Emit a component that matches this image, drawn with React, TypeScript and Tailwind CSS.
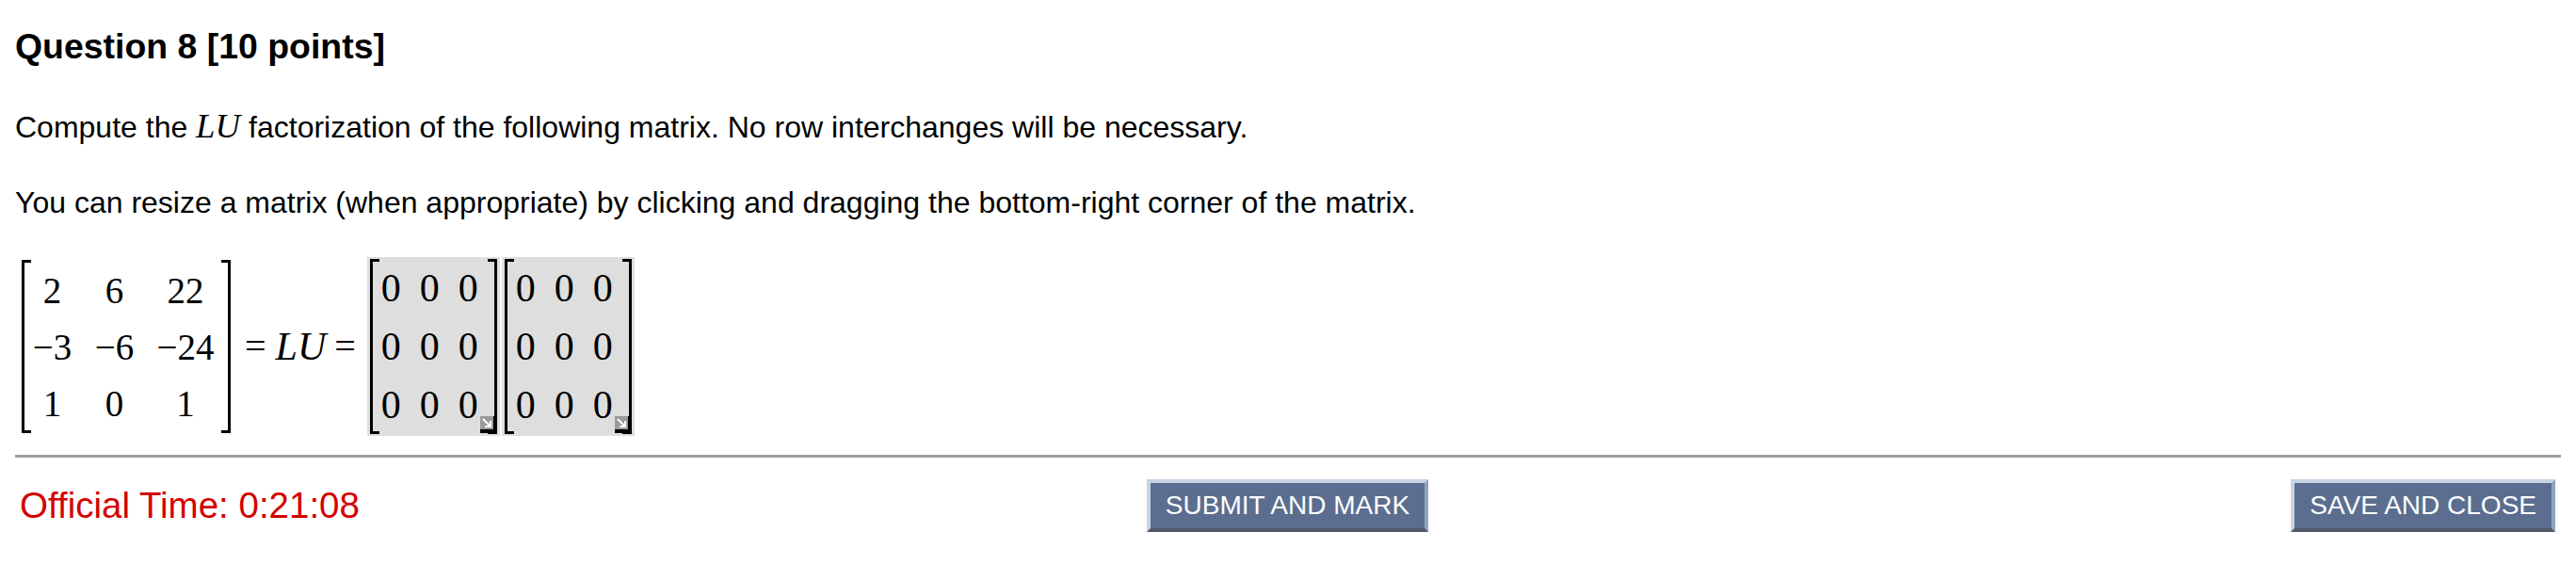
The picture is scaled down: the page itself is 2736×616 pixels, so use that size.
import React from "react"

const mathFont = { fontFamily: '"Liberation Serif", "Times New Roman", serif' }

const Bracket = ({ side }: { side: "left" | "right" }) => (
  <div
    className={`w-[10px] self-stretch border-y-[3px] border-black ${
      side === "left" ? "border-l-[3px]" : "border-r-[3px]"
    }`}
  />
)

const ResizeHandle = () => (
  <svg
    className="absolute bottom-[3px] right-[3px]"
    width="18"
    height="18"
    viewBox="0 0 18 18"
  >
    <rect x="0" y="0" width="18" height="18" fill="#5a5a5a" />
    <rect x="0" y="0" width="14" height="14" fill="#9a9a9a" />
    <path d="M14 0 H18 V18 H0 V14 H14 Z" fill="#000" />
    <path d="M3 3 L11 11 M11 5 V11 H5" stroke="#fff" strokeWidth="2" fill="none" />
  </svg>
)

const GivenMatrix = ({ rows }: { rows: string[][] }) => (
  <div className="flex ml-[7px]">
    <Bracket side="left" />
    <div className="grid grid-cols-[45px_45px_64px] gap-x-[21px] py-[2px]">
      {rows.flat().map((v, i) => (
        <div key={i} className="h-[60px] flex items-center justify-center leading-none text-[39px]">
          {v}
        </div>
      ))}
    </div>
    <div className="w-[6px]" />
    <Bracket side="right" />
  </div>
)

const InputMatrix = () => (
  <div className="relative flex bg-[#dedede] px-[3px] py-[2px]">
    <Bracket side="left" />
    <div className="grid grid-cols-[25px_25px_25px] gap-x-[16px]">
      {Array.from({ length: 9 }).map((_, i) => (
        <div key={i} className="h-[62px] flex items-center justify-center leading-none text-[42px]">
          0
        </div>
      ))}
    </div>
    <div className="w-[8px]" />
    <Bracket side="right" />
    <ResizeHandle />
  </div>
)

const Button = ({ label }: { label: string }) => (
  <button className="h-[56px] px-4 bg-[#5b6e8f] text-white text-[28px] leading-none border-[4px] border-t-[#c6d4e4] border-l-[#c6d4e4] border-r-[#91a4bd] border-b-[#4f5868]">
    {label}
  </button>
)

export default function App() {
  const given = [
    ["2", "6", "22"],
    ["\u22123", "\u22126", "\u221224"],
    ["1", "0", "1"],
  ]

  return (
    <div
      className="w-[2736px] h-[616px] bg-white text-black px-4 pt-[28px]"
      style={{ fontFamily: '"Liberation Sans", Arial, sans-serif' }}
    >
      <h3 className="text-[37.44px] leading-[43px] font-bold">Question 8 [10 points]</h3>

      <p className="mt-[46px] text-[32px] leading-[36px]">
        Compute the{" "}
        <span className="italic text-[36.8px] leading-[0]" style={mathFont}>
          LU
        </span>{" "}
        factorization of the following matrix. No row interchanges will be necessary.
      </p>

      <p className="mt-[44px] text-[32px] leading-[36px]">
        You can resize a matrix (when appropriate) by clicking and dragging the bottom-right corner
        of the matrix.
      </p>

      <div className="mt-[40px] flex items-center" style={mathFont}>
        <GivenMatrix rows={given} />
        <span className="ml-[15px] text-[40px] leading-none">=</span>
        <span className="ml-[10px] text-[42px] leading-none italic">LU</span>
        <span className="ml-[9px] text-[40px] leading-none">=</span>
        <div className="ml-[12px] flex gap-[2px]">
          <InputMatrix />
          <InputMatrix />
        </div>
      </div>

      <div className="mt-[20px] h-[3px] bg-[#a0a0a0]" />

      <div className="mt-[23px] grid grid-cols-3 items-center pl-[5px] pr-[6px]">
        <div className="justify-self-start text-[38.5px] leading-none text-[#d40000]">
          Official Time: 0:21:08
        </div>
        <div className="justify-self-center">
          <Button label="SUBMIT AND MARK" />
        </div>
        <div className="justify-self-end">
          <Button label="SAVE AND CLOSE" />
        </div>
      </div>
    </div>
  )
}
